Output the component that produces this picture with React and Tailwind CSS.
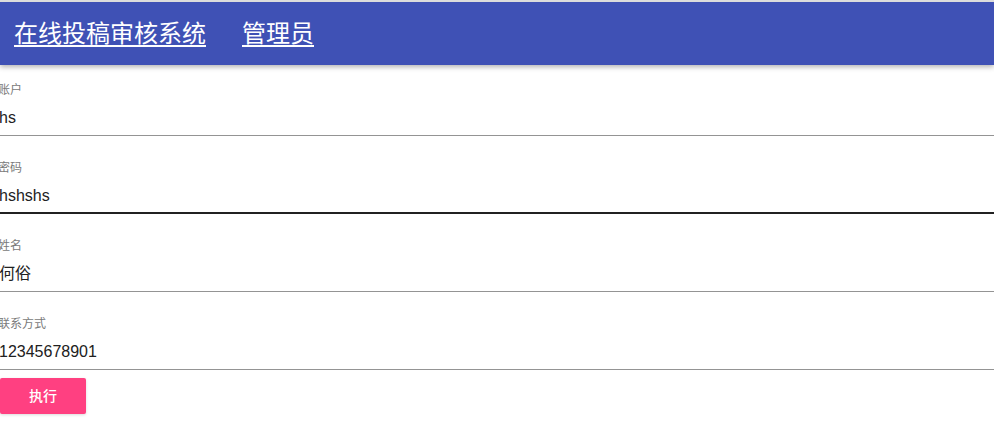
const fields = [
  { label: '账户', value: 'hs' },
  { label: '密码', value: 'hshshs', hovered: true },
  { label: '姓名', value: '何俗' },
  { label: '联系方式', value: '12345678901' },
];

function Field({ label, value, hovered }) {
  return (
    <div
      className={
        hovered
          ? 'flex flex-col pb-[4px] border-b-2 border-[#212121]'
          : 'flex flex-col pb-[5px] border-b border-[#949494]'
      }
    >
      <span className="h-4 text-[12px] leading-4 text-[#7a7a7a] -ml-[2px]">{label}</span>
      <span className="mt-[8px] h-6 text-[16px] leading-6 text-[#212121] -ml-[1px]">{value}</span>
    </div>
  );
}

export default function App() {
  return (
    <div
      className="min-h-[443px] w-full bg-white overflow-hidden"
      style={{ fontFamily: '"Liberation Sans", Arial, "Noto Sans CJK SC", sans-serif' }}
    >
      {/* Top bar */}
      <header className="relative z-10 h-[65px] border-t-2 border-[#dcdcdc] bg-[#3f51b5] shadow-[0_2px_5px_rgba(0,0,0,0.3)] flex items-center pl-[14px] gap-[36px]">
        <a href="#" className="text-[24px] leading-8 text-white underline underline-offset-[3px]">
          在线投稿审核系统
        </a>
        <a href="#" className="text-[24px] leading-8 text-white underline underline-offset-[3px]">
          管理员
        </a>
      </header>

      {/* Form */}
      <form className="flex flex-col pt-[17px]" onSubmit={e => e.preventDefault()}>
        <div className="flex flex-col gap-[24px]">
          {fields.map(f => (
            <Field key={f.label} {...f} />
          ))}
        </div>
        <button
          type="submit"
          className="mt-[8px] h-[36px] w-[86px] rounded-[2px] bg-[#ff4081] text-[14px] font-medium text-white shadow-[0_1px_3px_rgba(0,0,0,0.15)]"
        >
          执行
        </button>
      </form>
    </div>
  );
}
